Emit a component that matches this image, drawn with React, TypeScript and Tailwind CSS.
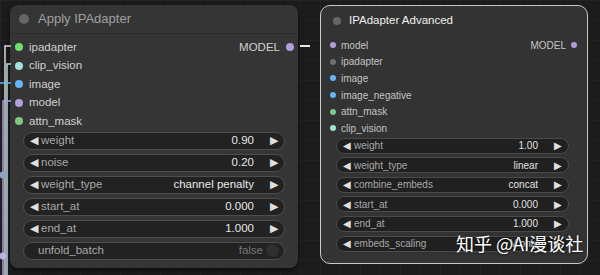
import React from 'react';

type Slot = { name: string; color: string };
type Widget = { label: string; value: string; toggle?: boolean };

const leftInputs: Slot[] = [
  { name: 'ipadapter', color: 'bg-[#6ee06e]' },
  { name: 'clip_vision', color: 'bg-[#a8e0dc]' },
  { name: 'image', color: 'bg-[#64b5f6]' },
  { name: 'model', color: 'bg-[#b39ddb]' },
  { name: 'attn_mask', color: 'bg-[#81c784]' },
];

const leftWidgets: Widget[] = [
  { label: 'weight', value: '0.90' },
  { label: 'noise', value: '0.20' },
  { label: 'weight_type', value: 'channel penalty' },
  { label: 'start_at', value: '0.000' },
  { label: 'end_at', value: '1.000' },
  { label: 'unfold_batch', value: 'false', toggle: true },
];

const rightInputs: Slot[] = [
  { name: 'model', color: 'bg-[#b39ddb]' },
  { name: 'ipadapter', color: 'bg-[#707070]' },
  { name: 'image', color: 'bg-[#64b5f6]' },
  { name: 'image_negative', color: 'bg-[#64b5f6]' },
  { name: 'attn_mask', color: 'bg-[#81c784]' },
  { name: 'clip_vision', color: 'bg-[#a8e0dc]' },
];

const rightWidgets: Widget[] = [
  { label: 'weight', value: '1.00' },
  { label: 'weight_type', value: 'linear' },
  { label: 'combine_embeds', value: 'concat' },
  { label: 'start_at', value: '0.000' },
  { label: 'end_at', value: '1.000' },
  { label: 'embeds_scaling', value: 'V only' },
];

function Wires() {
  return (
    <svg className="absolute left-0 top-0" width="20" height="275">
      <path d="M11 46 H5 V275" stroke="#d8d8d8" strokeWidth="1.5" fill="none" />
      <path d="M11 64 H7 V275" stroke="#a8e0dc" strokeWidth="1.5" fill="none" />
      <path d="M0 83 H11" stroke="#64b5f6" strokeWidth="1.5" fill="none" />
      <path d="M11 101 H3 V275" stroke="#b39ddb" strokeWidth="1.5" fill="none" />
      <circle cx="3" cy="175" r="3.5" fill="#8fa3c0" />
      <circle cx="3" cy="256" r="3.5" fill="#c0b0e8" />
    </svg>
  );
}

function LeftNode() {
  return (
    <div className="w-[288px] h-[263px] rounded-lg bg-[#353535] shadow-[0_2px_6px_rgba(0,0,0,0.6)] flex flex-col">
      <div className="h-[29px] flex items-center pl-[9px] gap-[9px] border-b border-[#2c2c2c]">
        <span className="w-[10px] h-[10px] rounded-full bg-[#666]" />
        <span className="text-[13px] text-[#a0a0a0]">Apply IPAdapter</span>
      </div>
      <div className="relative flex flex-col pt-[4px]">
        {leftInputs.map((s) => (
          <div key={s.name} className="h-[18.5px] flex items-center gap-[6px] pl-[5px] text-[11.5px] text-[#d0d0d0]">
            <span className={`w-[8px] h-[8px] rounded-full ${s.color}`} />
            {s.name}
          </div>
        ))}
        <div className="absolute right-[4px] top-[4px] h-[18.5px] flex items-center gap-[6px] text-[11.5px] text-[#d0d0d0]">
          MODEL
          <span className="w-[8px] h-[8px] rounded-full bg-[#b39ddb]" />
        </div>
      </div>
      <div className="flex flex-col gap-[4px] px-[13px] mt-[1px]">
        {leftWidgets.map((w) => (
          <div key={w.label} className="h-[18px] rounded-full bg-[#222] border border-[#4e4e4e] flex items-center text-[11.5px]">
            {w.toggle ? (
              <>
                <span className="pl-[14px] text-[#a8a8a8]">{w.label}</span>
                <span className="ml-auto text-[#777]">{w.value}</span>
                <span className="w-[13px] h-[13px] rounded-full bg-[#2f2f2f] ml-[3px] mr-[5px]" />
              </>
            ) : (
              <>
                <span className="pl-[6px] text-[#e0e0e0] text-[11px]">◀</span>
                <span className="pl-[3px] text-[#a8a8a8]">{w.label}</span>
                <span className="ml-auto text-[#e8e8e8]">{w.value}</span>
                <span className="pl-[16px] pr-[6px] text-[#e0e0e0] text-[11px]">▶</span>
              </>
            )}
          </div>
        ))}
      </div>
    </div>
  );
}

function RightNode() {
  return (
    <div className="w-[268px] h-[259px] rounded-[10px] bg-[#333] border-[1.5px] border-[#c8c8c8] flex flex-col">
      <div className="h-[30px] flex items-center pl-[12px] gap-[8px]">
        <span className="w-[8px] h-[8px] rounded-full bg-[#666]" />
        <span className="text-[11.5px] text-[#f0f0f0]">IPAdapter Advanced</span>
      </div>
      <div className="relative flex flex-col pt-[1px]">
        {rightInputs.map((s) => (
          <div key={s.name} className="h-[16.6px] flex items-center gap-[5px] pl-[9px] text-[10px] text-[#c4c4c4]">
            <span className={`block w-[6px] h-[6px] rounded-full ${s.color}`} />
            {s.name}
          </div>
        ))}
        <div className="absolute right-[10px] top-[1px] h-[16.6px] flex items-center gap-[5px] text-[10px] text-[#c4c4c4]">
          MODEL
          <span className="w-[6px] h-[6px] rounded-full bg-[#b39ddb]" />
        </div>
      </div>
      <div className="flex flex-col gap-[3.6px] pl-[15px] pr-[18px] mt-[1px]">
        {rightWidgets.map((w) => (
          <div key={w.label} className="h-[16px] rounded-full bg-[#202020] border border-[#4a4a4a] flex items-center text-[10px]">
            <span className="pl-[6px] text-[#e0e0e0] text-[10px]">◀</span>
            <span className="pl-[3px] text-[#a8a8a8]">{w.label}</span>
            <span className="ml-auto text-[#e0e0e0]">{w.value}</span>
            <span className="pl-[16px] pr-[6px] text-[#e0e0e0] text-[10px]">▶</span>
          </div>
        ))}
      </div>
    </div>
  );
}

export default function App() {
  return (
    <div
      className="relative w-[600px] h-[275px] overflow-hidden bg-[#1c1c1c] bg-[linear-gradient(#232323_1px,transparent_1px),linear-gradient(90deg,#232323_1px,transparent_1px)] bg-[length:20px_20px]"
      style={{ fontFamily: '"Liberation Sans", Arial, sans-serif' }}
    >
      <Wires />
      <div className="flex items-start pt-[5px] pl-[10px]">
        <LeftNode />
        <div className="w-[10px] h-[2px] bg-[#e8e8e8] mt-[40px] ml-[2px]" />
        <div className="ml-[10px]">
          <RightNode />
        </div>
      </div>
      <div
        className="absolute left-[456px] top-[230px] whitespace-nowrap text-[18px] text-white [text-shadow:0_0_3px_rgba(0,0,0,0.9)]"
        style={{ fontFamily: '"Noto Sans CJK SC", "Liberation Sans", sans-serif' }}
      >
        知乎 @AI漫谈社
      </div>
    </div>
  );
}
